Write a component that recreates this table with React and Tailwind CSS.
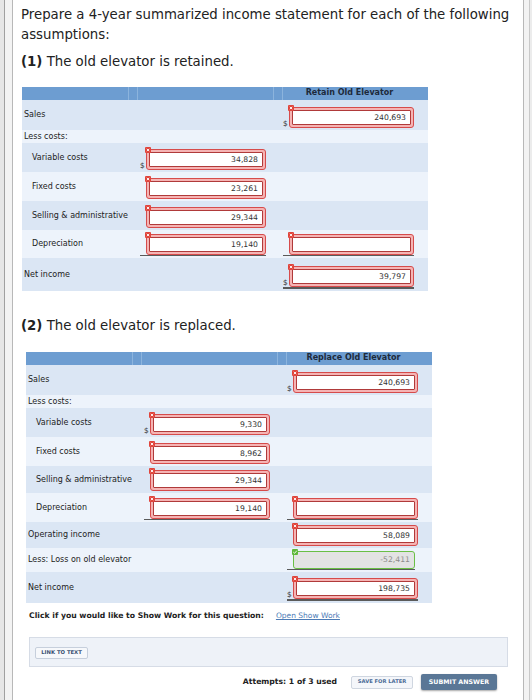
import React from 'react';

function Badge({ ok }) {
  return (
    <svg className="absolute -left-[2px] -top-[3px]" width="6" height="6" viewBox="0 0 6 6">
      <rect x="0" y="0" width="6" height="6" rx="1" fill={ok ? '#5fb83a' : '#e0453c'} />
      {ok ? (
        <path d="M1.3 3.1 L2.6 4.3 L4.8 1.7" stroke="#fff" strokeWidth="0.9" fill="none" />
      ) : (
        <path d="M1.8 1.8 L4.2 4.2 M4.2 1.8 L1.8 4.2" stroke="#fff" strokeWidth="0.9" />
      )}
    </svg>
  );
}

function Field({ value, green, wide }) {
  if (green) {
    return (
      <div className="relative h-[18px] w-[122px] rounded-[3px] border border-[#6abf45] bg-[#e3e3e3] pr-[4px] text-right text-[7.7px] leading-[16px] text-[#8c8c8c]">
        {value}
        <Badge ok />
      </div>
    );
  }
  return (
    <div className={`relative h-[21px] rounded-[3px] border border-[#d64b4b] bg-[#f5b4b4] p-[2px] ${wide ? 'w-[125px]' : 'w-[120px]'}`}>
      <div className="h-full rounded-[1px] border border-[#b03a3a] bg-white pr-[4px] text-right text-[7.7px] leading-[13px] text-[#333]">
        {value}
      </div>
      <Badge />
    </div>
  );
}

function Cell({ data, wide }) {
  if (!data) return <div />;
  const line =
    data.line === 'single' ? 'border-b border-[#5a5a5a]' : data.line === 'double' ? 'border-b-2 border-[#5a5a5a]' : '';
  return (
    <div className={`flex items-end pb-[2px] ${wide ? 'pl-[10px]' : 'pl-[12px]'}`}>
      <div className={`flex items-end ${line}`}>
        <span className="w-[6px] text-[7.5px] leading-[9px] text-[#333]">{data.dollar ? '$' : ''}</span>
        <Field value={data.value} green={data.green} wide={wide} />
      </div>
    </div>
  );
}

function Row({ label, indent, h, dark, col2, col3 }) {
  return (
    <div className={`grid grid-cols-[106px_145px_155px] ${h} ${dark ? 'bg-[#dbe6f4]' : 'bg-[#edf3fb]'}`}>
      <div className={`flex items-center text-[8px] text-[#222] ${indent ? 'pl-[10px]' : 'pl-[2px]'}`}>{label}</div>
      <Cell data={col2} />
      <Cell data={col3} wide />
    </div>
  );
}

function Header({ title }) {
  return (
    <div className="grid h-[13px] grid-cols-[106px_9px_136px_9px_146px] bg-[#6d9dd1]">
      <div />
      <div className="border-l border-[#8cb4dd]" />
      <div className="border-l border-[#8cb4dd]" />
      <div className="border-l border-[#8cb4dd]" />
      <div className="border-l border-[#8cb4dd] pr-[12px] text-center text-[8px] font-bold leading-[12px] text-[#1d2a3b]">
        {title}
      </div>
    </div>
  );
}

const retained = [
  { label: 'Sales', h: 'h-[30px]', dark: true, col3: { value: '240,693', dollar: true } },
  { label: 'Less costs:', h: 'h-[13px]' },
  { label: 'Variable costs', indent: true, h: 'h-[29px]', dark: true, col2: { value: '34,828', dollar: true } },
  { label: 'Fixed costs', indent: true, h: 'h-[29px]', col2: { value: '23,261' } },
  { label: 'Selling & administrative', indent: true, h: 'h-[29px]', dark: true, col2: { value: '29,344' } },
  { label: 'Depreciation', indent: true, h: 'h-[28px]', col2: { value: '19,140', line: 'single' }, col3: { value: '', line: 'single' } },
  { label: 'Net income', h: 'h-[33px]', dark: true, col3: { value: '39,797', dollar: true, line: 'double' } },
];

const replaced = [
  { label: 'Sales', h: 'h-[30px]', dark: true, col3: { value: '240,693', dollar: true } },
  { label: 'Less costs:', h: 'h-[13px]' },
  { label: 'Variable costs', indent: true, h: 'h-[29px]', dark: true, col2: { value: '9,330', dollar: true } },
  { label: 'Fixed costs', indent: true, h: 'h-[29px]', col2: { value: '8,962' } },
  { label: 'Selling & administrative', indent: true, h: 'h-[27px]', dark: true, col2: { value: '29,344' } },
  { label: 'Depreciation', indent: true, h: 'h-[29px]', col2: { value: '19,140', line: 'single' }, col3: { value: '', line: 'single' } },
  { label: 'Operating income', h: 'h-[26px]', dark: true, col3: { value: '58,089' } },
  { label: 'Less: Loss on old elevator', h: 'h-[24px]', col3: { value: '-52,411', green: true, line: 'single' } },
  { label: 'Net income', h: 'h-[31px]', dark: true, col3: { value: '198,735', dollar: true, line: 'double' } },
];

export default function App() {
  return (
    <div className="flex h-[700px] w-[532px] bg-white font-['DejaVu_Sans',sans-serif]">
      <div className="w-[4px] bg-[#e6e6e6]" />
      <div className="w-[8px] border-l border-[#a0a0a0] bg-[#f3f3f3]" />
      <div className="w-[512px] border-l border-r border-[#b8b8b8] bg-white pl-[8px]">
        <p className="pt-[5px] text-[13.3px] leading-[20px] text-[#222]">
          Prepare a 4-year summarized income statement for each of the following assumptions:
        </p>
        <p className="mt-[7px] text-[13.3px] leading-[20px] text-[#222]">
          <b>(1)</b> The old elevator is retained.
        </p>

        <div className="ml-[1px] mt-[15px] w-[406px]">
          <Header title="Retain Old Elevator" />
          {retained.map((r) => (
            <Row key={r.label} {...r} />
          ))}
        </div>

        <p className="mt-[25px] text-[13.3px] leading-[20px] text-[#222]">
          <b>(2)</b> The old elevator is replaced.
        </p>

        <div className="ml-[5px] mt-[16px] w-[406px]">
          <Header title="Replace Old Elevator" />
          {replaced.map((r) => (
            <Row key={r.label} {...r} />
          ))}
        </div>

        <div className="ml-[8px] mt-[7px] flex h-[12px] items-center gap-[12px] text-[#222]">
          <span className="text-[7.7px] font-bold">Click if you would like to Show Work for this question:</span>
          <span className="text-[7.5px] text-[#4c7bb6] underline">Open Show Work</span>
        </div>

        <div className="ml-[8px] mt-[15px] h-[30px] w-[479px] border border-[#d6dce6] bg-[#eef2f8] pl-[5px] pt-[9px]">
          <div className="flex h-[12px] w-[53px] items-center justify-center rounded-[2px] border border-[#c6cfdc] bg-[#f6f8fb] text-[5.3px] font-bold text-[#3b5273]">
            LINK TO TEXT
          </div>
        </div>

        <div className="ml-[8px] mt-[7px] flex w-[479px] items-center justify-end pr-[11px]">
          <span className="mr-[14px] text-[7.7px] font-bold text-[#222]">Attempts: 1 of 3 used</span>
          <div className="mr-[8px] flex h-[13px] w-[62px] items-center justify-center rounded-[2px] border border-[#cfd6e0] bg-[#f4f6fa] text-[5.2px] font-bold text-[#4a6a95]">
            SAVE FOR LATER
          </div>
          <div className="flex h-[16px] w-[76px] items-center justify-center rounded-[2px] bg-[#5a7796] text-[6.3px] font-bold text-white shadow-[0_1px_2px_rgba(0,0,0,0.35)]">
            SUBMIT ANSWER
          </div>
        </div>
      </div>
      <div className="w-[5px] bg-[#f3f3f3]" />
      <div className="w-[1px] bg-[#c9c9c9]" />
      <div className="w-[2px] bg-[#ececec]" />
    </div>
  );
}
